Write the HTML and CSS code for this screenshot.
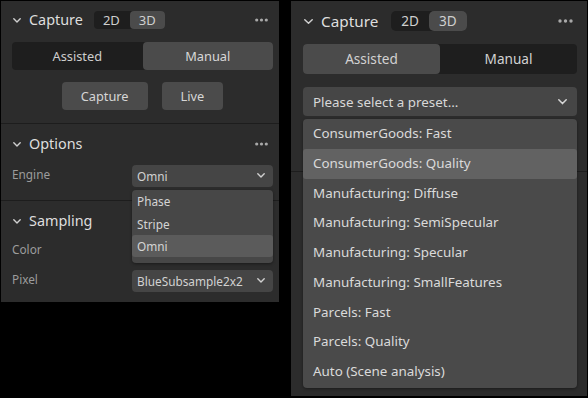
FILE: index.html
```html
<!DOCTYPE html>
<html>
<head>
<meta charset="utf-8">
<link rel="stylesheet" href="styles.css">
</head>
<body>
<div class="panel left">
  <section class="sec sec-capture">
    <div class="hdr">
      <svg class="chev" width="8" height="5" viewBox="0 0 8 5"><path d="M0.8 0.8 L4 4 L7.2 0.8" fill="none" stroke="#cfcfcf" stroke-width="1.4" stroke-linecap="round" stroke-linejoin="round"/></svg>
      <span class="title">Capture</span>
      <div class="tog"><span class="t">2D</span><span class="t on">3D</span></div>
      <svg class="more" width="13" height="4" viewBox="0 0 13 4"><circle cx="1.7" cy="2" r="1.6" fill="#a9a9a9"/><circle cx="6.5" cy="2" r="1.6" fill="#a9a9a9"/><circle cx="11.3" cy="2" r="1.6" fill="#a9a9a9"/></svg>
    </div>
    <div class="seg"><span class="s">Assisted</span><span class="s on">Manual</span></div>
    <div class="btns"><span class="btn">Capture</span><span class="btn">Live</span></div>
  </section>
  <section class="sec sec-options">
    <div class="hdr">
      <svg class="chev" width="8" height="5" viewBox="0 0 8 5"><path d="M0.8 0.8 L4 4 L7.2 0.8" fill="none" stroke="#cfcfcf" stroke-width="1.4" stroke-linecap="round" stroke-linejoin="round"/></svg>
      <span class="title">Options</span>
      <svg class="more" width="13" height="4" viewBox="0 0 13 4"><circle cx="1.7" cy="2" r="1.6" fill="#a9a9a9"/><circle cx="6.5" cy="2" r="1.6" fill="#a9a9a9"/><circle cx="11.3" cy="2" r="1.6" fill="#a9a9a9"/></svg>
    </div>
    <div class="row">
      <span class="lbl">Engine</span>
      <div class="field">
        <div class="sel"><span>Omni</span><svg width="8" height="5" viewBox="0 0 8 5"><path d="M0.8 0.8 L4 4 L7.2 0.8" fill="none" stroke="#d0d0d0" stroke-width="1.4" stroke-linecap="round" stroke-linejoin="round"/></svg></div>
        <div class="menu menu-left">
          <div class="mi">Phase</div>
          <div class="mi">Stripe</div>
          <div class="mi hl">Omni</div>
        </div>
      </div>
    </div>
  </section>
  <section class="sec sec-sampling">
    <div class="hdr">
      <svg class="chev" width="8" height="5" viewBox="0 0 8 5"><path d="M0.8 0.8 L4 4 L7.2 0.8" fill="none" stroke="#cfcfcf" stroke-width="1.4" stroke-linecap="round" stroke-linejoin="round"/></svg>
      <span class="title">Sampling</span>
    </div>
    <div class="rows">
      <div class="row">
        <span class="lbl">Color</span>
        <div class="field"><div class="sel"></div></div>
      </div>
      <div class="row">
        <span class="lbl">Pixel</span>
        <div class="field"><div class="sel"><span>BlueSubsample2x2</span><svg width="8" height="5" viewBox="0 0 8 5"><path d="M0.8 0.8 L4 4 L7.2 0.8" fill="none" stroke="#d0d0d0" stroke-width="1.4" stroke-linecap="round" stroke-linejoin="round"/></svg></div></div>
      </div>
    </div>
  </section>
</div>

<div class="panel right">
  <section class="rsec">
    <div class="rhdr">
      <svg class="chev" width="9" height="5" viewBox="0 0 9 5"><path d="M0.8 0.8 L4.5 4.2 L8.2 0.8" fill="none" stroke="#cfcfcf" stroke-width="1.5" stroke-linecap="round" stroke-linejoin="round"/></svg>
      <span class="rtitle">Capture</span>
      <div class="rtog"><span class="t">2D</span><span class="t on">3D</span></div>
      <svg class="rmore" width="15" height="4" viewBox="0 0 15 4"><circle cx="2" cy="2" r="1.7" fill="#a9a9a9"/><circle cx="7.5" cy="2" r="1.7" fill="#a9a9a9"/><circle cx="13" cy="2" r="1.7" fill="#a9a9a9"/></svg>
    </div>
    <div class="rseg"><span class="s on">Assisted</span><span class="s">Manual</span></div>
    <div class="rfield">
      <div class="rsel"><span>Please select a preset...</span><svg width="9" height="6" viewBox="0 0 9 6"><path d="M0.8 0.8 L4.5 4.6 L8.2 0.8" fill="none" stroke="#d6d6d6" stroke-width="1.5" stroke-linecap="round" stroke-linejoin="round"/></svg></div>
      <div class="menu menu-right">
        <div class="rmi">ConsumerGoods: Fast</div>
        <div class="rmi hl">ConsumerGoods: Quality</div>
        <div class="rmi">Manufacturing: Diffuse</div>
        <div class="rmi">Manufacturing: SemiSpecular</div>
        <div class="rmi">Manufacturing: Specular</div>
        <div class="rmi">Manufacturing: SmallFeatures</div>
        <div class="rmi">Parcels: Fast</div>
        <div class="rmi">Parcels: Quality</div>
        <div class="rmi">Auto (Scene analysis)</div>
      </div>
    </div>
  </section>
</div>
</body>
</html>
```

FILE: styles.css
```css
* { box-sizing: border-box; }
html, body { margin: 0; padding: 0; }
body {
  background: #000;
  width: 588px;
  height: 398px;
  overflow: hidden;
  display: flex;
  align-items: flex-start;
  padding: 1px 0 0 1px;
  font-family: "Noto Sans", "DejaVu Sans", sans-serif;
  color: #d6d6d6;
}
.panel {
  background: #2c2c2c;
  position: relative;
}
.left {
  width: 278px;
  height: 301px;
}
.right {
  width: 296px;
  height: 395px;
  margin-left: 12px;
}

/* ---------- left panel ---------- */
.sec {
  padding: 8px 6px 0 11px;
  border-bottom: 1px solid #1d1d1d;
  display: flex;
  flex-direction: column;
}
.sec-capture { padding-top: 7px; padding-bottom: 13px; }
.sec-options { padding-bottom: 13px; }
.sec-sampling { border-bottom: none; padding-bottom: 10px; }

.hdr {
  height: 24px;
  display: flex;
  align-items: center;
}
.chev { margin-left: 1px; flex: none; }
.title {
  margin-left: 8px;
  font-size: 14.4px;
  line-height: 20px;
  color: #dedede;
}
.tog {
  margin-left: 11px;
  display: flex;
  background: #1e1e1e;
  border-radius: 4px;
  height: 18px;
}
.tog .t {
  font-size: 13px;
  line-height: 18px;
  padding: 0 9px;
  color: #cfcfcf;
  border-radius: 4px;
}
.tog .t:first-child { padding: 0 10px 0 9px; }
.tog .t.on { background: #4b4b4b; }
.more { margin-left: auto; margin-right: 5px; }

.seg {
  margin-top: 10px;
  height: 28px;
  display: flex;
  background: #1e1e1e;
  border-radius: 4px;
}
.seg .s {
  flex: 1;
  text-align: center;
  font-size: 12.8px;
  line-height: 28px;
  color: #cdcdcd;
  border-radius: 4px;
}
.seg .s.on { background: #4b4b4b; color: #d8d8d8; }

.btns {
  margin-top: 12px;
  display: flex;
  justify-content: center;
  gap: 14px;
}
.btn {
  height: 28px;
  line-height: 28px;
  padding: 0 19px;
  background: #4b4b4b;
  border-radius: 4px;
  font-size: 12.8px;
  color: #d6d6d6;
}

.row {
  display: flex;
  align-items: center;
}
.sec-options .row { margin-top: 9px; }
.rows {
  margin-top: 7px;
  display: flex;
  flex-direction: column;
  gap: 8px;
}
.lbl {
  width: 120px;
  flex: none;
  font-size: 11.8px;
  line-height: 16px;
  padding-bottom: 4px;
  color: #9c9c9c;
}
.field {
  flex: 1;
  position: relative;
}
.sel {
  height: 22px;
  background: #454545;
  border-radius: 4px;
  display: flex;
  align-items: center;
  justify-content: space-between;
  padding: 0 8px 1px 5px;
  font-size: 11.8px;
  color: #d2d2d2;
}

.menu {
  position: absolute;
  left: 0;
  right: 0;
  z-index: 5;
  border-radius: 4px;
}
.menu-left {
  top: 25px;
  background: #474747;
  padding: 0 0 6px;
  box-shadow: 0 1px 3px rgba(0,0,0,0.4);
}
.mi {
  height: 22px;
  line-height: 22px;
  padding-left: 5px;
  font-size: 11.8px;
  color: #d4d4d4;
  border-radius: 3px;
}
.mi:first-child { height: 23px; }
.mi.hl { background: #5b5b5b; }

/* ---------- right panel ---------- */
.rsec {
  padding: 8px 10px 55px 12px;
  border-bottom: 1px solid #1d1d1d;
  display: flex;
  flex-direction: column;
}
.rhdr {
  height: 24px;
  display: flex;
  align-items: center;
}
.rhdr .chev { margin-left: 1px; }
.rtitle {
  margin-left: 8px;
  font-size: 15.3px;
  line-height: 20px;
  color: #dedede;
}
.rtog {
  margin-left: 13px;
  display: flex;
  background: #1e1e1e;
  border-radius: 5px;
  height: 20px;
}
.rtog .t {
  font-size: 13.6px;
  line-height: 20px;
  padding: 0 10px;
  color: #cfcfcf;
  border-radius: 5px;
}
.rtog .t.on { background: #4b4b4b; }
.rmore { margin-left: auto; margin-right: 4px; }

.rseg {
  margin-top: 11px;
  height: 30px;
  display: flex;
  background: #1e1e1e;
  border-radius: 4px;
}
.rseg .s {
  flex: 1;
  text-align: center;
  font-size: 13.6px;
  line-height: 30px;
  color: #d2d2d2;
  border-radius: 4px;
}
.rseg .s.on { background: #4b4b4b; }

.rfield {
  margin-top: 13px;
  position: relative;
}
.rsel {
  height: 29px;
  background: #464646;
  border-radius: 4px;
  display: flex;
  align-items: center;
  justify-content: space-between;
  padding: 0 10px 0 10px;
  font-size: 13.4px;
  color: #d8d8d8;
}
.menu-right {
  top: 32px;
  background: #4a4a4a;
  padding: 0 0 1px;
  box-shadow: 0 1px 3px rgba(0,0,0,0.4);
}
.rmi {
  height: 29.75px;
  line-height: 29.75px;
  padding-left: 10px;
  font-size: 13.4px;
  color: #dadada;
  border-radius: 3px;
}
.rmi.hl { background: #626262; }
```
